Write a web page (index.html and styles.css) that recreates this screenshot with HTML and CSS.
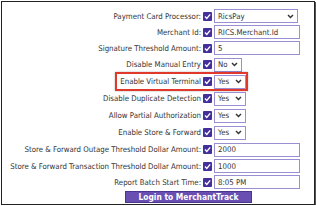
FILE: index.html
```
<!DOCTYPE html>
<html lang="en">
<head>
  <meta charset="UTF-8">
  <title>Merchant Settings</title>
  <link rel="stylesheet" href="styles.css">
</head>
<body>
  <div class="frame">
    <div class="settings">
      <!-- row 1 -->
      <div class="row r16">
        <label>Payment Card Processor:</label>
        <span class="check"><svg viewBox="0 0 9 9"><path d="M2 4.6 L3.8 6.4 L7.2 2.4" /></svg></span>
        <span class="select wide">RicsPay<svg class="caret" viewBox="0 0 7 5"><path d="M1 1 L3.5 3.6 L6 1" /></svg></span>
      </div>
      <div class="row r16">
        <label>Merchant Id:</label>
        <span class="check"><svg viewBox="0 0 9 9"><path d="M2 4.6 L3.8 6.4 L7.2 2.4" /></svg></span>
        <span class="text-input">RICS.Merchant.Id</span>
      </div>
      <div class="row r16">
        <label>Signature Threshold Amount:</label>
        <span class="check"><svg viewBox="0 0 9 9"><path d="M2 4.6 L3.8 6.4 L7.2 2.4" /></svg></span>
        <span class="text-input">5</span>
      </div>
      <div class="row r17">
        <label>Disable Manual Entry</label>
        <span class="check"><svg viewBox="0 0 9 9"><path d="M2 4.6 L3.8 6.4 L7.2 2.4" /></svg></span>
        <span class="select no">No<svg class="caret" viewBox="0 0 7 5"><path d="M1 1 L3.5 3.6 L6 1" /></svg></span>
      </div>
      <div class="row r17 highlight">
        <label>Enable Virtual Terminal</label>
        <span class="check"><svg viewBox="0 0 9 9"><path d="M2 4.6 L3.8 6.4 L7.2 2.4" /></svg></span>
        <span class="select yes">Yes<svg class="caret" viewBox="0 0 7 5"><path d="M1 1 L3.5 3.6 L6 1" /></svg></span>
        <span class="marker"></span>
      </div>
      <div class="row r17">
        <label>Disable Duplicate Detection</label>
        <span class="check"><svg viewBox="0 0 9 9"><path d="M2 4.6 L3.8 6.4 L7.2 2.4" /></svg></span>
        <span class="select yes">Yes<svg class="caret" viewBox="0 0 7 5"><path d="M1 1 L3.5 3.6 L6 1" /></svg></span>
      </div>
      <div class="row r17">
        <label>Allow Partial Authorization</label>
        <span class="check"><svg viewBox="0 0 9 9"><path d="M2 4.6 L3.8 6.4 L7.2 2.4" /></svg></span>
        <span class="select yes">Yes<svg class="caret" viewBox="0 0 7 5"><path d="M1 1 L3.5 3.6 L6 1" /></svg></span>
      </div>
      <div class="row r17">
        <label>Enable Store &amp; Forward</label>
        <span class="check"><svg viewBox="0 0 9 9"><path d="M2 4.6 L3.8 6.4 L7.2 2.4" /></svg></span>
        <span class="select yes">Yes<svg class="caret" viewBox="0 0 7 5"><path d="M1 1 L3.5 3.6 L6 1" /></svg></span>
      </div>
      <div class="row r17">
        <label>Store &amp; Forward Outage Threshold Dollar Amount:</label>
        <span class="check"><svg viewBox="0 0 9 9"><path d="M2 4.6 L3.8 6.4 L7.2 2.4" /></svg></span>
        <span class="text-input">2000</span>
      </div>
      <div class="row r16">
        <label>Store &amp; Forward Transaction Threshold Dollar Amount:</label>
        <span class="check"><svg viewBox="0 0 9 9"><path d="M2 4.6 L3.8 6.4 L7.2 2.4" /></svg></span>
        <span class="text-input">1000</span>
      </div>
      <div class="row r16">
        <label>Report Batch Start Time:</label>
        <span class="check"><svg viewBox="0 0 9 9"><path d="M2 4.6 L3.8 6.4 L7.2 2.4" /></svg></span>
        <span class="text-input">8:05 PM</span>
      </div>
      <div class="button-row">
        <button class="login">Login to MerchantTrack</button>
      </div>
    </div>
  </div>
</body>
</html>
```

FILE: styles.css
```
body {
  margin: 0;
  background: #fff;
  font-family: "DejaVu Sans Condensed", "DejaVu Sans", sans-serif;
  font-size: 7.8px;
  color: #333;
}

.frame {
  margin: 1px 0 0 1px;
  width: 312px;
  height: 202px;
  border: 1px solid #222;
  box-shadow: 1px 1px 0 #555;
  overflow: hidden;
}

.settings {
  padding-top: 6px;
}

.row {
  display: grid;
  grid-template-columns: 199px 9px auto;
  column-gap: 2px;
  align-items: center;
  position: relative;
}

.r16 { height: 16px; }
.r17 { height: 17px; }

.row label {
  text-align: right;
  white-space: nowrap;
}

.check {
  width: 9px;
  height: 9px;
  background: #43309a;
  border-radius: 1px;
  display: flex;
}

.check svg {
  width: 9px;
  height: 9px;
  fill: none;
  stroke: #fff;
  stroke-width: 1.4;
}

.text-input,
.select {
  box-sizing: border-box;
  border: 1px solid #9a8fd2;
  background: #fff;
  color: #333;
  display: flex;
  align-items: center;
  padding-left: 3px;
  white-space: nowrap;
}

.text-input {
  width: 86px;
  height: 14px;
}

.select {
  height: 14px;
  justify-content: space-between;
  padding-right: 3px;
}

.select.wide { width: 84px; }
.select.no { width: 28px; }
.select.yes { width: 32px; }

.caret {
  width: 7px;
  height: 5px;
  fill: none;
  stroke: #333;
  stroke-width: 1.4;
}

/* red annotation box around the highlighted setting */
.marker {
  position: absolute;
  left: 113px;
  top: -1px;
  width: 133px;
  height: 19px;
  box-sizing: border-box;
  border: 2px solid #e0392c;
  box-shadow: 0 0 2px rgba(0, 0, 0, 0.3);
  pointer-events: none;
}

.button-row {
  padding: 1px 0 0 123px;
}

.login {
  font-family: "DejaVu Sans Condensed", "DejaVu Sans", sans-serif;
  font-size: 8.4px;
  font-weight: bold;
  color: #fff;
  background: #6a4fb3;
  border: 1px solid #4a3590;
  height: 12px;
  width: 127px;
  padding: 0;
  line-height: 10px;
}
```
